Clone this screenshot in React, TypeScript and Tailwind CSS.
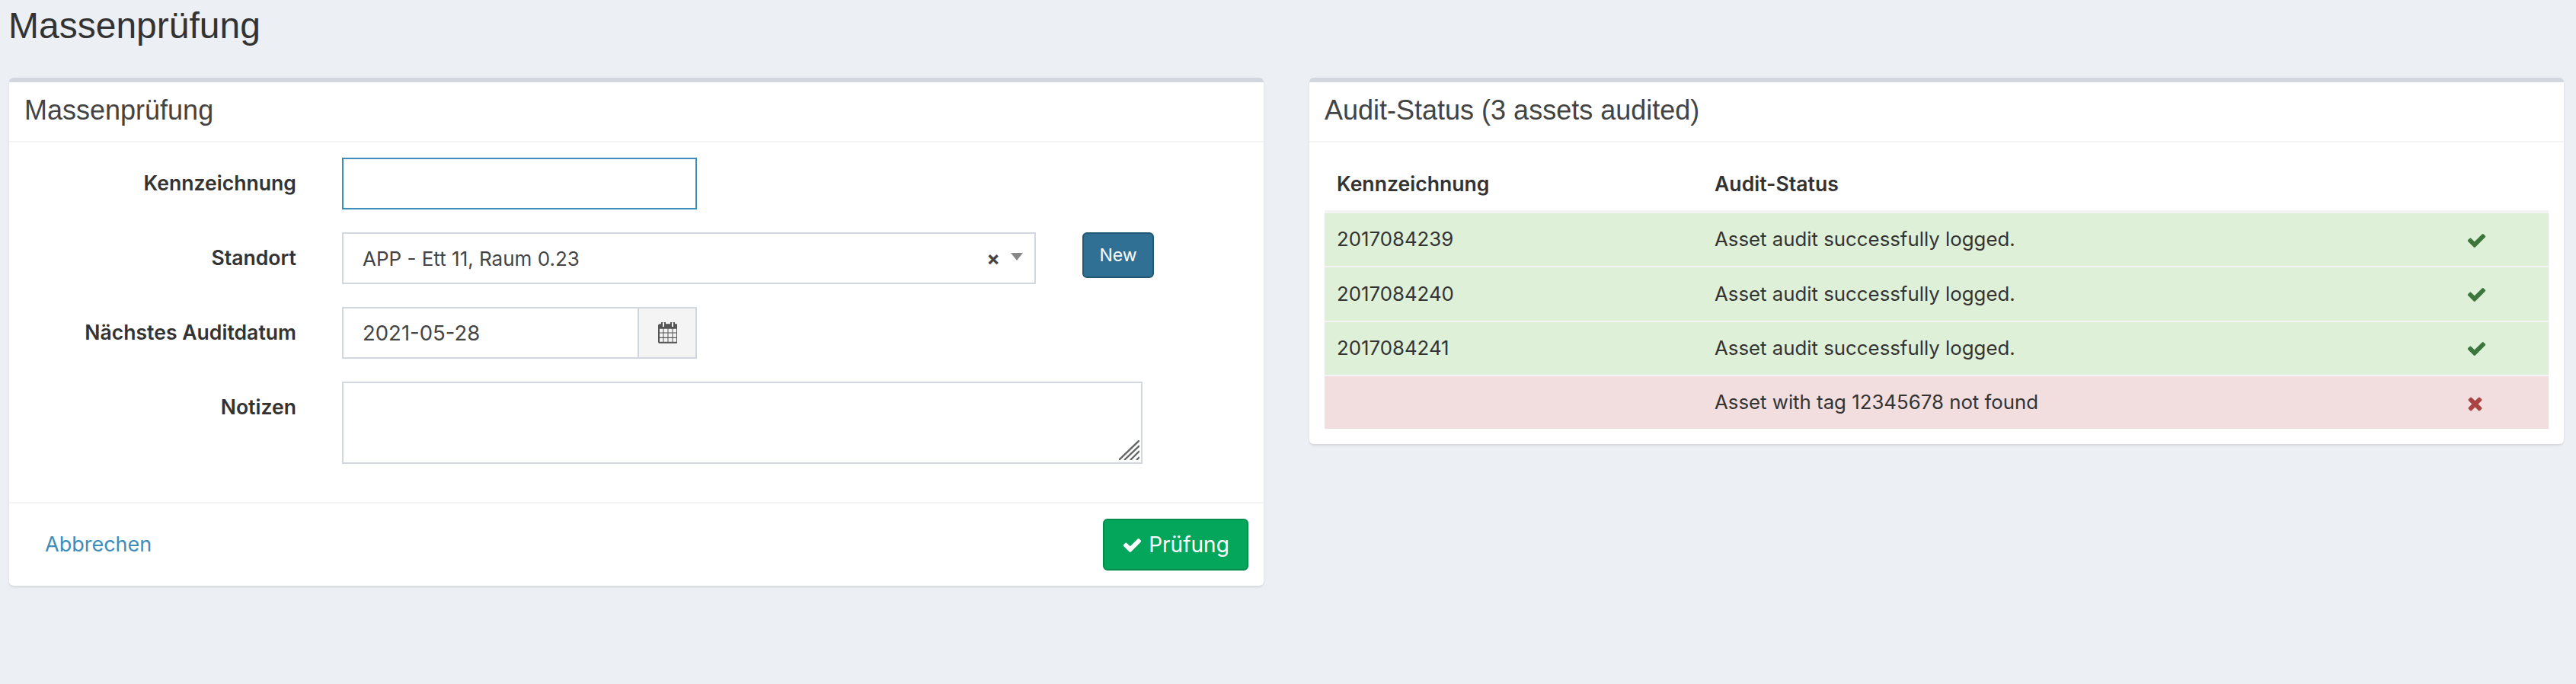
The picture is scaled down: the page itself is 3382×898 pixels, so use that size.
const labelClass = "w-[377px] h-[68px] flex items-center justify-end text-[26.6px] font-semibold text-[#333]";
const inputClass = "border-2 border-[#d2d6de] bg-white outline-none text-[26px] text-[#444]";

const checkPath = "M1671 566q0 40-28 68l-724 724-136 136q-28 28-68 28t-68-28l-136-136-362-362q-28-28-28-68t28-68l136-136q28-28 68-28t68 28l294 295 656-657q28-28 68-28t68 28l136 136q28 28 28 68z";
const timesPath = "M1490 1322q0 40-28 68l-136 136q-28 28-68 28t-68-28l-294-294-294 294q-28 28-68 28t-68-28l-136-136q-28-28-28-68t28-68l294-294-294-294q-28-28-28-68t28-68l136-136q28-28 68-28t68 28l294 294 294-294q28-28 68-28t68 28l136 136q28 28 28 68t-28 68l-294 294 294 294q28 28 28 68z";
const calendarPath = "M192 1664h288v-288h-288v288zm352 0h320v-288h-320v288zm-352-352h288v-320h-288v320zm352 0h320v-320h-320v320zm-352-384h288v-288h-288v288zm736 736h320v-288h-320v288zm-384-736h320v-288h-320v288zm768 736h288v-288h-288v288zm-384-352h320v-320h-320v320zm-352-864v-288q0-13-9.5-22.5t-22.5-9.5h-64q-13 0-22.5 9.5t-9.5 22.5v288q0 13 9.5 22.5t22.5 9.5h64q13 0 22.5-9.5t9.5-22.5zm736 864h288v-320h-288v320zm-384-384h320v-288h-320v288zm384 0h288v-288h-288v288zm32-480v-288q0-13-9.5-22.5t-22.5-9.5h-64q-13 0-22.5 9.5t-9.5 22.5v288q0 13 9.5 22.5t22.5 9.5h64q13 0 22.5-9.5t9.5-22.5zm384-64v1280q0 52-38 90t-90 38h-1408q-52 0-90-38t-38-90v-1280q0-52 38-90t90-38h128v-96q0-66 47-113t113-47h64q66 0 113 47t47 113v96h384v-96q0-66 47-113t113-47h64q66 0 113 47t47 113v96h128q52 0 90 38t38 90z";

function Fa({ d, className }: { d: string; className: string }) {
  return (
    <svg viewBox="0 0 1792 1792" className={className} fill="currentColor">
      <path d={d} />
    </svg>
  );
}

function PanelHeader({ title }: { title: string }) {
  return (
    <div className="h-[79px] flex items-center px-[20px] pb-[4px] border-b-2 border-[#f4f4f4]">
      <h3 className="text-[36px] text-[#444] font-['Liberation_Sans',sans-serif]">{title}</h3>
    </div>
  );
}

const rows = [
  { tag: "2017084239", msg: "Asset audit successfully logged.", ok: true },
  { tag: "2017084240", msg: "Asset audit successfully logged.", ok: true },
  { tag: "2017084241", msg: "Asset audit successfully logged.", ok: true },
  { tag: "", msg: "Asset with tag 12345678 not found", ok: false },
];

export default function App() {
  return (
    <div className="min-h-[898px] bg-[#ecf0f5] font-['Inter',sans-serif]">
      <div className="h-[102px] pl-[11px] pt-[10px]">
        <h1 className="text-[48px] leading-[48px] text-[#333] font-['Liberation_Sans',sans-serif]">Massenprüfung</h1>
      </div>

      <div className="flex items-start gap-[60px] pl-[12px] pr-[16px]">
        <div className="flex-1 bg-white border-t-[6px] border-[#d2d6de] rounded-[6px] shadow-[0_2px_3px_rgba(0,0,0,0.1)]">
          <PanelHeader title="Massenprüfung" />
          <div className="pt-[20px] pb-[50px] flex flex-col gap-[30px]">
            <div className="flex gap-[60px]">
              <label className={labelClass}>Kennzeichnung</label>
              <input className="w-[466px] h-[68px] border-2 border-[#3c8dbc] outline-none" />
            </div>
            <div className="flex gap-[60px]">
              <label className={labelClass}>Standort</label>
              <div className={`${inputClass} w-[911px] h-[68px] flex items-center justify-between pl-[25px] pr-[15px]`}>
                <span>APP - Ett 11, Raum 0.23</span>
                <span className="flex items-center gap-[14px]">
                  <span className="text-[26px] font-bold text-[#444]">×</span>
                  <span className="w-0 h-0 border-x-[8px] border-t-[10px] border-x-transparent border-t-[#888] mb-[4px]" />
                </span>
              </div>
              <button className="w-[94px] h-[60px] ml-[1px] rounded-[6px] bg-[#307095] border-2 border-[#245773] text-white text-[23px]">New</button>
            </div>
            <div className="flex gap-[60px]">
              <label className={labelClass}>Nächstes Auditdatum</label>
              <div className="flex w-[466px] h-[68px]">
                <input readOnly value="2021-05-28" className="border-2 border-[#d2d6de] bg-white outline-none text-[27.5px] text-[#444] w-[390px] h-full pl-[25px]" />
                <span className="flex-1 flex items-center justify-center border-2 border-l-0 border-[#d2d6de] bg-[#f4f4f4] text-[#555]">
                  <svg viewBox="0 120 1664 1680" preserveAspectRatio="none" className="w-[26px] h-[28px]" fill="currentColor">
                    <path d={calendarPath} />
                  </svg>
                </span>
              </div>
            </div>
            <div className="flex gap-[60px]">
              <label className={labelClass}>Notizen</label>
              <div className="relative w-[1051px] h-[108px]">
                <textarea className={`${inputClass} w-full h-full block resize-none`} />
                <svg viewBox="0 0 27 26" className="absolute right-[4px] bottom-[5px] w-[27px] h-[26px]" stroke="#666" strokeWidth="2.4">
                  <path d="M0 26 L27 0 M7 26 L27 7 M15 26 L27 14 M23 26 L27 22" />
                </svg>
              </div>
            </div>
          </div>
          <div className="border-t-2 border-[#f4f4f4] h-[110px] flex items-center justify-between pl-[47px] pr-[20px]">
            <a className="text-[27px] text-[#3c8dbc]">Abbrechen</a>
            <button className="w-[191px] h-[68px] rounded-[6px] bg-[#03a65a] border-2 border-[#008d4c] text-white text-[28px] flex items-center justify-center gap-[8px]">
              <Fa d={checkPath} className="w-[27px] h-[27px]" />
              Prüfung
            </button>
          </div>
        </div>

        <div className="flex-1 bg-white border-t-[6px] border-[#d2d6de] rounded-[6px] shadow-[0_2px_3px_rgba(0,0,0,0.1)]">
          <PanelHeader title="Audit-Status (3 assets audited)" />
          <div className="p-[20px]">
            <table className="w-full table-fixed border-separate border-spacing-0 text-[25.8px] text-[#333]">
              <thead>
                <tr>
                  <th className="w-[496px] h-[73px] px-[16px] text-left text-[26.6px] font-semibold border-b-4 border-[#f4f4f4]">Kennzeichnung</th>
                  <th className="h-[73px] px-[16px] text-left text-[26.6px] font-semibold border-b-4 border-[#f4f4f4]">Audit-Status</th>
                  <th className="w-[123px] h-[73px] border-b-4 border-[#f4f4f4]"></th>
                </tr>
              </thead>
              <tbody>
                {rows.map((r, i) => {
                  const bg = r.ok ? "bg-[#dff0d8]" : "bg-[#f2dede]";
                  const line = i > 0 ? "h-[71.33px] border-t-2 border-[#f4f4f4]" : "h-[69.33px]";
                  return (
                    <tr key={i}>
                      <td className={`${bg} ${line} px-[16px]`}>{r.tag}</td>
                      <td className={`${bg} ${line} px-[16px]`}>{r.msg}</td>
                      <td className={`${bg} ${line} px-[16px]`}>
                        <Fa
                          d={r.ok ? checkPath : timesPath}
                          className={r.ok ? "w-[27px] h-[27px] -ml-[1px] mt-[1px] text-[#3c763d]" : "w-[27px] h-[27px] -ml-[3px] mt-[1px] text-[#a94442]"}
                        />
                      </td>
                    </tr>
                  );
                })}
              </tbody>
            </table>
          </div>
        </div>
      </div>
    </div>
  );
}
